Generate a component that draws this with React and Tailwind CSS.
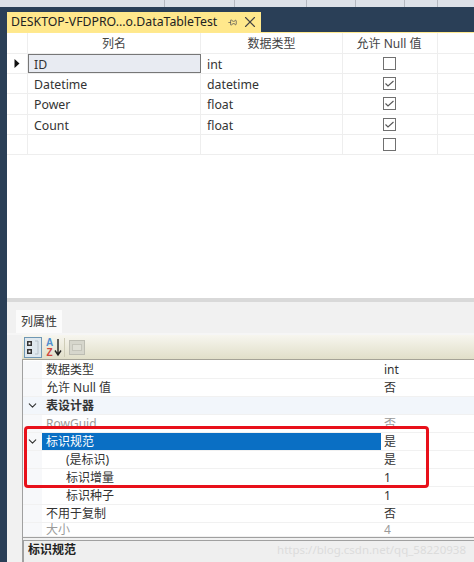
import { ChevronDown, Pin, X } from 'lucide-react';

const font = { fontFamily: '"Noto Sans", "Noto Sans CJK SC", sans-serif' };

const columns = [
  { name: 'ID', type: 'int', nullable: false, current: true },
  { name: 'Datetime', type: 'datetime', nullable: true },
  { name: 'Power', type: 'float', nullable: true, tall: true },
  { name: 'Count', type: 'float', nullable: true },
  { name: '', type: '', nullable: false },
];

function CheckBox({ checked }) {
  return (
    <div className="w-[13px] h-[13px] border border-[#707070] bg-white flex items-center justify-center">
      {checked && (
        <svg width="11" height="11" viewBox="0 0 11 11" fill="none">
          <path d="M1.5 5.5 L4 8 L9.5 3" stroke="#555" strokeWidth="1.1" />
        </svg>
      )}
    </div>
  );
}

function GridRow({ col }) {
  return (
    <div className={`flex ${col.tall ? 'h-[21px]' : 'h-5'} border-b border-[#eeeeee] text-[12.3px] text-[#333] leading-[21px]`}>
      <div className="w-[21px] shrink-0 border-r border-[#eeeeee] flex items-center justify-center">
        {col.current && (
          <svg width="6" height="9" viewBox="0 0 6 9"><path d="M0.5 0 L5.5 4.5 L0.5 9 Z" fill="#111" /></svg>
        )}
      </div>
      <div
        className={
          col.current
            ? 'w-[173px] shrink-0 border border-[#777] bg-[#e8ebf2] pl-[5px] leading-[19px]'
            : 'w-[173px] shrink-0 border-r border-[#eeeeee] pl-[6px]'
        }
      >
        {col.name}
      </div>
      <div className="w-[142px] shrink-0 border-r border-[#eeeeee] pl-[6px]">{col.type}</div>
      <div className="w-[95px] shrink-0 border-r border-[#eeeeee] pt-[3px] pr-[2px] flex justify-center">
        <CheckBox checked={col.nullable} />
      </div>
    </div>
  );
}

function PropRow({ label, value, indent, muted, selected, section, clipped }) {
  return (
    <div className={`flex ${clipped ? 'h-[14px] leading-[14px]' : 'h-[18px] leading-[18px]'} text-[12px] overflow-hidden border-b border-[#f1f1f1] ${section ? 'bg-[#f2f6fb]' : 'bg-white'}`}>
      <div className={`w-[19px] shrink-0 flex items-center justify-center ${section ? '' : 'bg-[#f7f8fa]'}`}>
        {(section || selected) && <ChevronDown size={13} strokeWidth={2} className="text-[#333]" />}
      </div>
      <div
        className={[
          'w-[339px] shrink-0',
          indent ? 'pl-6' : 'pl-1',
          selected ? 'bg-[#0a6fc4] text-white' : muted ? 'text-[#9a9a9a]' : 'text-[#333]',
          section ? 'font-bold' : '',
        ].join(' ')}
      >
        {label}
      </div>
      <div className={`pl-[3px] ${muted ? 'text-[#9a9a9a]' : 'text-[#333]'}`}>{value}</div>
    </div>
  );
}

function Toolbar() {
  return (
    <div className="h-[25px] shrink-0 flex items-center pl-0.5 bg-gradient-to-b from-[#f7f6ef] to-[#e1dfc9] border-b border-[#a5a397]">
      <div className="w-[18px] h-[21px] border border-[#6f97b4] bg-[#dfe8ee] flex items-center justify-center">
        <svg width="14" height="17" viewBox="0 0 14 17">
          <rect x="1" y="2" width="5" height="5" fill="#333" />
          <rect x="1" y="10" width="5" height="5" fill="#333" />
          <rect x="2.5" y="3.5" width="2" height="2" fill="#fff" />
          <rect x="2.5" y="11.5" width="2" height="2" fill="#fff" />
          <path d="M9 2 H12 V15 H9" stroke="#b9c3ca" fill="none" />
        </svg>
      </div>
      <div className="w-[17px] h-[21px] ml-[3px] flex">
        <div className="w-[9px] flex flex-col items-center text-[10px] leading-[10px] font-bold pt-px" style={{ fontFamily: '"Liberation Sans", sans-serif' }}>
          <span className="text-[#4f8fd0]">A</span>
          <span className="text-[#d0473f]">Z</span>
        </div>
        <svg width="8" height="20" viewBox="0 0 8 20">
          <path d="M4 2 V17 M1 13.5 L4 18 L7 13.5" stroke="#222" strokeWidth="1.4" fill="none" />
        </svg>
      </div>
      <div className="w-px h-[19px] bg-[#cfcdb8] ml-[2px] mr-[4px]" />
      <div className="w-4 h-[15px] border border-[#bdbdb3] bg-[#d6d6cc] flex items-center justify-center">
        <div className="w-[10px] h-[7px] border border-[#c4c4ba] bg-[#dfdfd6]" />
      </div>
    </div>
  );
}

export default function App() {
  return (
    <div className="w-[474px] h-[562px] overflow-hidden flex flex-col bg-[#f0f0f0]" style={font}>
      {/* top strip */}
      <div className="h-[7px] shrink-0 bg-[#dde1e8] flex">
        <div className="w-[165px] border-r border-[#b5b9c0]" />
        <div className="w-[70px] border-r border-[#b5b9c0]" />
        <div className="w-[72px] border-r border-[#b5b9c0]" />
        <div className="w-[49px] border-r border-[#b5b9c0]" />
        <div className="w-[49px] border-r border-[#b5b9c0]" />
        <div className="w-[33px] border-r border-[#b5b9c0]" />
      </div>

      <div className="flex-1 flex min-h-0">
        <div className="w-[7px] shrink-0 bg-[#2a3f57]" />

        <div className="flex-1 flex flex-col min-w-0">
          {/* document tab */}
          <div className="h-[26px] shrink-0 bg-[#2a3f57] flex items-end border-b border-[#ffe98f]">
            <div className="w-[254px] h-[20px] bg-[#ffe88c] flex items-center pl-1 text-[#222] text-[12.3px] whitespace-nowrap">
              <span className="w-[217px]">DESKTOP-VFDPRO...o.DataTableTest</span>
              <Pin size={9} strokeWidth={2} className="text-[#555] rotate-90 mr-[4px]" />
              <X size={18} strokeWidth={1.5} className="text-[#444]" />
            </div>
          </div>

          {/* table designer */}
          <div className="h-[265px] shrink-0 bg-white">
            <div className="flex h-[21px] border-b border-[#eeeeee] text-[12px] text-[#444] leading-[22px] text-center">
              <div className="w-[21px] shrink-0 border-r border-[#eeeeee]" />
              <div className="w-[173px] shrink-0 border-r border-[#eeeeee]">列名</div>
              <div className="w-[142px] shrink-0 border-r border-[#eeeeee]">数据类型</div>
              <div className="w-[95px] shrink-0 border-r border-[#eeeeee] pr-[2px]">允许 Null 值</div>
            </div>
            {columns.map((col, i) => (
              <GridRow key={i} col={col} />
            ))}
          </div>

          {/* splitter */}
          <div className="h-[4px] shrink-0 bg-[#d9d9d9]" />

          {/* properties pane */}
          <div className="flex-1 min-h-0 relative flex flex-col bg-[#f1f1f1]">
            <div className="h-[31px] shrink-0 flex items-end pl-[9px]">
              <div className="w-[46px] h-[23px] bg-[#fbfbfb] text-[12px] text-[#333] leading-[23px] text-center">列属性</div>
            </div>
            <div className="h-[2px] shrink-0 bg-[#f6f6f6]" />
            <div className="ml-[15px] flex-1 min-h-0 flex flex-col">
              <Toolbar />
              <div className="flex-1 min-h-0 border-l border-[#a0a0a0]">
                <div className="h-px bg-white" />
                <PropRow label="数据类型" value="int" />
                <PropRow label="允许 Null 值" value="否" />
                <PropRow label="表设计器" section />
                <PropRow label="RowGuid" value="否" muted />
                <PropRow label="标识规范" value="是" selected />
                <PropRow label="(是标识)" value="是" indent />
                <PropRow label="标识增量" value="1" indent />
                <PropRow label="标识种子" value="1" indent />
                <PropRow label="不用于复制" value="否" />
                <PropRow label="大小" value="4" muted clipped />
                <div className="h-[3px] bg-[#f1f1f1] border-t border-[#a0a0a0]" />
                <div className="h-[22px] border-t border-l border-[#a0a0a0] bg-[#efefef] pl-1 text-[12px] font-bold text-[#222] leading-[17px] flex justify-between whitespace-nowrap">
                  <span>标识规范</span>
                  <span className="font-normal text-[11.5px] text-[#dcdcdc] pr-2">https://blog.csdn.net/qq_58220938</span>
                </div>
              </div>
            </div>
            {/* red annotation box */}
            <div className="absolute left-[17px] top-[124px] w-[405px] h-[62px] border-[3px] border-[#e8101a] rounded-[4px]" />
          </div>
        </div>
      </div>
    </div>
  );
}
